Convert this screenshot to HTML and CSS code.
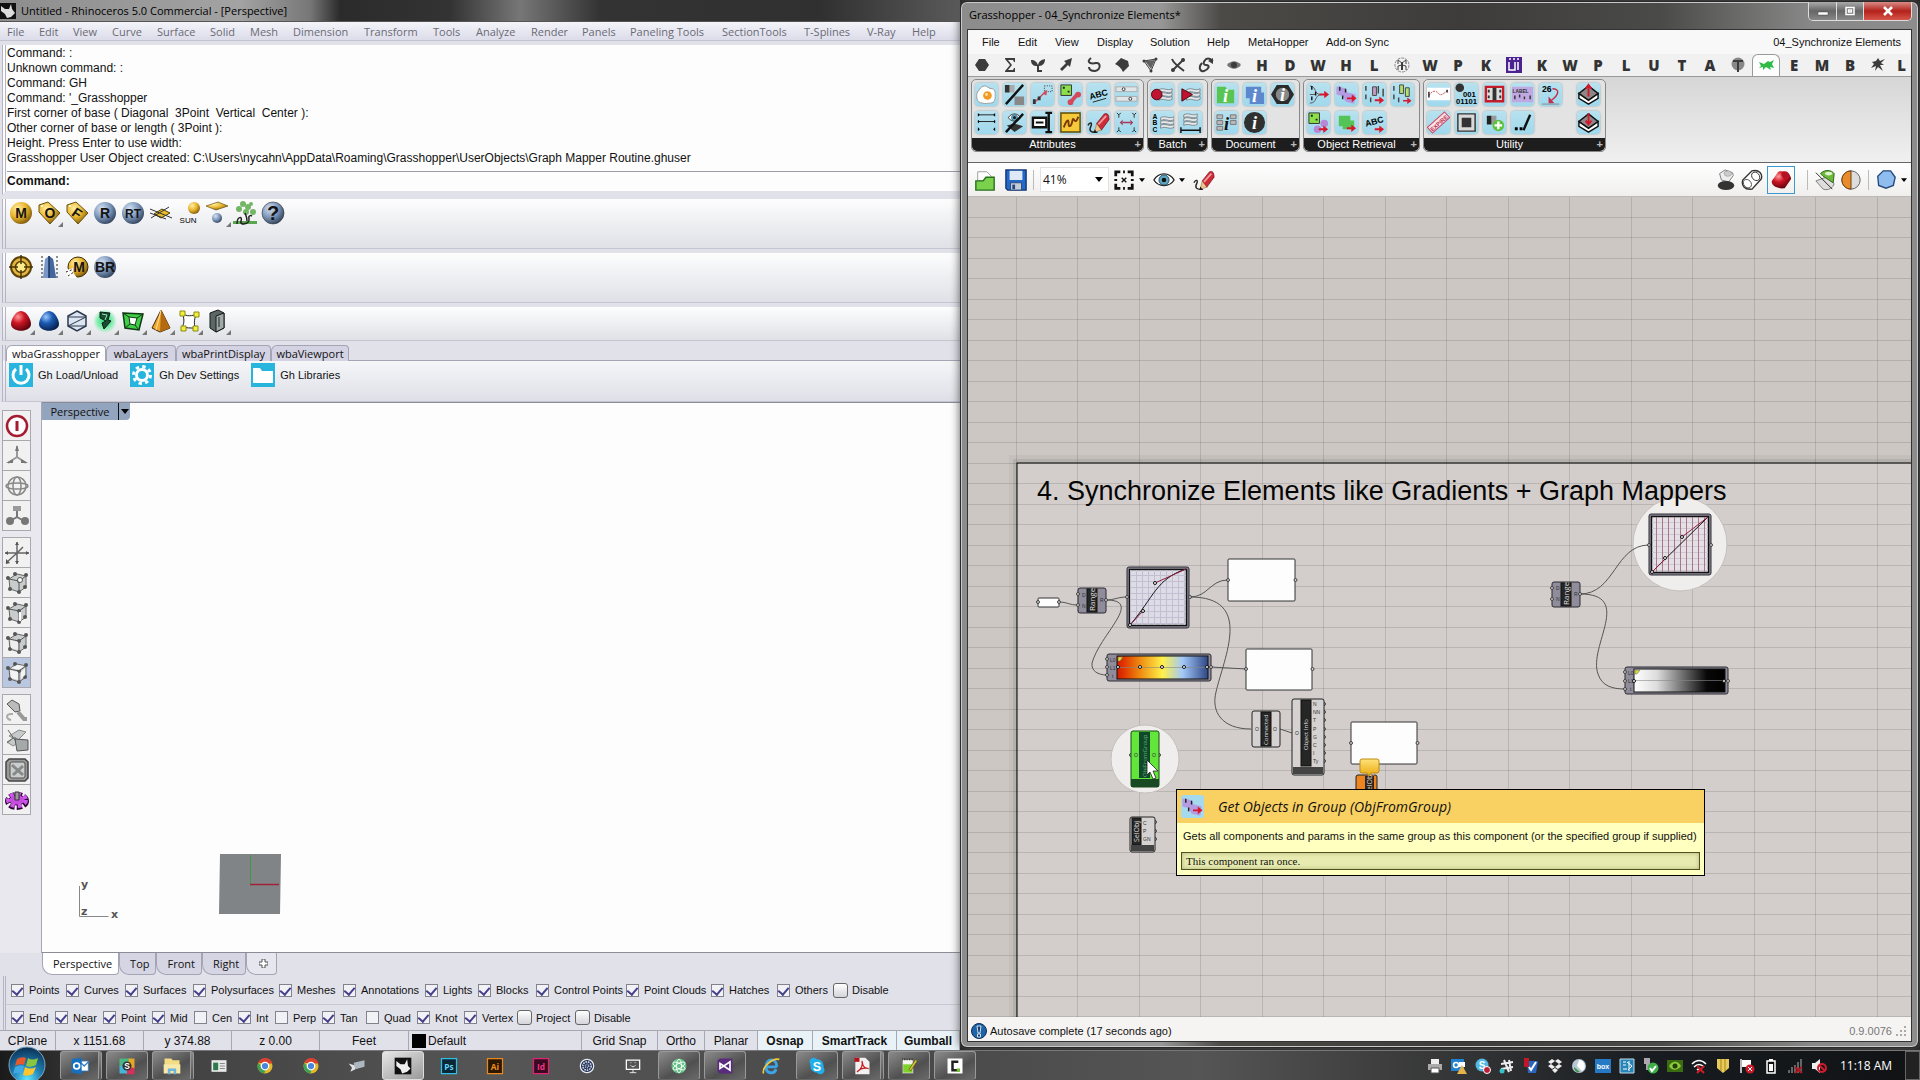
FILE: index.html
```html
<!DOCTYPE html>
<html lang="en">
<head>
<meta charset="utf-8">
<title>Untitled - Rhinoceros 5.0 Commercial - [Perspective]</title>
<link rel="stylesheet" href="styles.css">
</head>
<body>
<svg class="defs" aria-hidden="true">
  <defs>
    <radialGradient id="gold" cx=".35" cy=".3" r=".8"><stop offset="0" stop-color="#fff0a0"/><stop offset=".5" stop-color="#e8b32c"/><stop offset="1" stop-color="#6d4a05"/></radialGradient>
    <radialGradient id="steel" cx=".35" cy=".3" r=".8"><stop offset="0" stop-color="#d5e2f2"/><stop offset=".5" stop-color="#7d97bb"/><stop offset="1" stop-color="#26354d"/></radialGradient>
    <radialGradient id="red" cx=".35" cy=".3" r=".8"><stop offset="0" stop-color="#ff9a9a"/><stop offset=".4" stop-color="#cf1626"/><stop offset="1" stop-color="#4d0008"/></radialGradient>
    <radialGradient id="blue" cx=".35" cy=".3" r=".8"><stop offset="0" stop-color="#9cc8ff"/><stop offset=".4" stop-color="#1c5cb4"/><stop offset="1" stop-color="#04183e"/></radialGradient>
    <radialGradient id="orb" cx=".5" cy=".9" r=".9"><stop offset="0" stop-color="#5ee6ff"/><stop offset=".45" stop-color="#1f7fb5"/><stop offset="1" stop-color="#0b2f52"/></radialGradient>
    <radialGradient id="glow"><stop offset="0" stop-color="#28dd78"/><stop offset=".6" stop-color="#7fedac"/><stop offset="1" stop-color="#7fedac" stop-opacity="0"/></radialGradient>
    <linearGradient id="heat"><stop offset="0" stop-color="#d61a00"/><stop offset=".08" stop-color="#e03800"/><stop offset=".25" stop-color="#ee8a10"/><stop offset=".5" stop-color="#fff14a"/><stop offset=".72" stop-color="#a3c8fa"/><stop offset="1" stop-color="#2e4684"/></linearGradient>
    <linearGradient id="mono"><stop offset="0" stop-color="#fff"/><stop offset=".25" stop-color="#ddd"/><stop offset=".8" stop-color="#080808"/><stop offset="1" stop-color="#000"/></linearGradient>
    <linearGradient id="tag" x2="0" y2="1"><stop offset="0" stop-color="#ffe27a"/><stop offset="1" stop-color="#e8a90c"/></linearGradient>
    <pattern id="grid" width="123" height="41" patternUnits="userSpaceOnUse" x="1016" y="483">
      <path d="M.5 0v41M61.5 0v41M0 .5h123M0 21.5h123" stroke="#000" stroke-opacity=".12" fill="none"/>
    </pattern>
    <pattern id="cells" width="6" height="6" patternUnits="userSpaceOnUse" x="1130" y="569"><path d="M0 .5h6M.5 0v6" stroke="#c2c0d0" stroke-width="1" fill="none"/></pattern>
    <pattern id="stripes" width="6" height="6" patternUnits="userSpaceOnUse" x="1651" y="516"><path d="M0 .5h6" stroke="#ccc7d2" fill="none"/><path d="M5.5 0v6" stroke="#a87886" fill="none"/></pattern>
    <symbol id="corner" viewBox="0 0 5 5"><path d="M5 0v5H0z" fill="#777"/></symbol>
    <symbol id="cube" viewBox="0 0 24 24"><path d="M4 8l8-5 9 2v11l-7 5-9-3z" fill="#c9cccd" stroke="#666"/><path d="M4 8l10 2v11M14 10l7-5" fill="none" stroke="#555"/><g fill="#555"><circle cx="3" cy="7" r="2"/><circle cx="10" cy="3" r="2"/><circle cx="21" cy="4" r="2"/><circle cx="14" cy="10" r="2"/><circle cx="20" cy="16" r="2"/><circle cx="5" cy="18" r="2"/><circle cx="14" cy="21" r="2"/></g></symbol>
    <symbol id="stack" viewBox="0 0 24 24"><g fill="#e4e8ea" stroke="#6c7478" stroke-width=".8"><path d="M8 18c5-3 9 2 14-1v-3c-5 3-9-2-14 1z"/><path d="M8 14c5-3 9 2 14-1v-3c-5 3-9-2-14 1z"/><path d="M8 10c5-3 9 2 14-1V6c-5 3-9-2-14 1z"/></g></symbol>
    <symbol id="rarrow" viewBox="0 0 10 8"><path d="M0 3h5V0l5 4-5 4V5H0z" fill="#d8182c"/></symbol>
    <symbol id="chrome" viewBox="0 0 24 24"><circle cx="12" cy="12" r="9" fill="#e4b929"/><path d="M4 8a9 9 0 0 1 17 1h-9z" fill="#d9412f"/><path d="M4 8a9 9 0 0 0 7 13l3-7-6-1z" fill="#3ca354"/><circle cx="12" cy="12" r="4.500" fill="#4a86e0" stroke="#fff" stroke-width="1.500"/></symbol>
    <symbol id="pencil" viewBox="0 0 24 24"><path d="M1 15c2-4 5-3 3 1s-1 7 7 6" fill="none" stroke="#222" stroke-width="1.500"/><path d="M10 13L18 3q5-2 5 6l-8 11z" fill="#cf2b36" stroke="#6d1018" stroke-width=".7"/><path d="M12 14l8-9" stroke="#f09aa0" stroke-width="2"/><path d="M10 13l5 7-7 2z" fill="#f0c690" stroke="#7a5424" stroke-width=".5"/><path d="M8 19l2 3-3 1z" fill="#111"/></symbol>
    <symbol id="eye" viewBox="0 0 24 24"><path d="M1 12c5-9 17-9 22 0-5 8-17 8-22 0z" fill="#fff" stroke="#222" stroke-width="1.500"/><circle cx="12" cy="12" r="5.500" fill="#5ea6c4" stroke="#1e4b60"/><circle cx="12" cy="12" r="2.500" fill="#111"/></symbol>
    <symbol id="down" viewBox="0 0 8 5"><path d="M0 0h8L4 5z" fill="#000"/></symbol>
    <symbol id="group" viewBox="0 0 24 24"><path d="M3 5l7 2 2 4 8 2-1 7-7-2-3-6-6-1z" fill="#b59be2" stroke="#b59be2" stroke-width="3" stroke-linejoin="round"/><path d="M5 4v4M11 6v4M8 13v4" stroke="#222" stroke-width="1.500"/><use href="#rarrow" x="12" y="12" width="11" height="8"/></symbol>
    <symbol id="book" viewBox="0 0 24 24"><path d="M12 3l10 8-10 7L2 11z" fill="#8f8787" stroke="#111" stroke-width="1.500"/><path d="M2 11v5l10 6 10-6v-5l-10 7z" fill="#fff" stroke="#111" stroke-width="1.500"/></symbol>
  </defs>
</svg>

<div class="desktop">
<main class="rhino">
  <header class="rhino-title">
    <svg width="16" height="16" viewBox="0 0 16 16"><path d="M0 0h16v16H0z" fill="#111"/><path d="M1 3l4 3 4 0 2-5 1 5 3 4-4 4-4 1-2-4-4-3z" fill="#ddd"/></svg>
    <h1>Untitled - Rhinoceros 5.0 Commercial - [Perspective]</h1>
  </header>
  <nav class="rhino-menu">
    <a href="#">File</a><a href="#">Edit</a><a href="#">View</a><a href="#">Curve</a><a href="#">Surface</a><a href="#">Solid</a><a href="#">Mesh</a><a href="#">Dimension</a><a href="#">Transform</a><a href="#">Tools</a><a href="#">Analyze</a><a href="#">Render</a><a href="#">Panels</a><a href="#">Paneling Tools</a><a href="#">SectionTools</a><a href="#">T-Splines</a><a href="#">V-Ray</a><a href="#">Help</a>
  </nav>

  <section class="band command">
    <div class="history">
      <p>Command: :</p><p>Unknown command: :</p><p>Command: GH</p><p>Command: '_Grasshopper</p>
      <p>First corner of base ( Diagonal&nbsp; 3Point&nbsp; Vertical&nbsp; Center ):</p><p>Other corner of base or length ( 3Point ):</p><p>Height. Press Enter to use width:</p>
      <p>Grasshopper User Object created: C:\Users\nycahn\AppData\Roaming\Grasshopper\UserObjects\Graph Mapper Routine.ghuser</p>
    </div>
    <div class="prompt"><label for="cmd">Command:</label><input id="cmd" type="text"></div>
  </section>

  <section class="band tools tall">
    <button aria-label="Materials"><svg viewBox="0 0 24 24"><circle cx="12" cy="12" r="11" fill="url(#gold)"/><text x="12" y="17" class="glyph">M</text></svg></button>
    <button aria-label="Options"><svg viewBox="0 0 24 24"><path d="M2 4l9-3 12 11-10 11L2 11z" fill="url(#gold)" stroke="#6b5310"/><circle cx="5" cy="5" r="1" fill="#fff"/><text x="13" y="17" class="glyph">O</text></svg><svg class="corner"><use href="#corner"/></svg></button>
    <button aria-label="Frame buffer"><svg viewBox="0 0 24 24"><path d="M2 4l9-3 12 11-10 11L2 11z" fill="url(#gold)" stroke="#6b5310"/><circle cx="5" cy="5" r="1" fill="#fff"/><text x="12" y="17" class="glyph" transform="rotate(35 12 12)">F</text></svg></button>
    <button aria-label="Render"><svg viewBox="0 0 24 24"><circle cx="12" cy="12" r="11" fill="url(#steel)"/><text x="12" y="17" class="glyph">R</text></svg></button>
    <button aria-label="Render real time"><svg viewBox="0 0 24 24"><circle cx="12" cy="12" r="11" fill="url(#steel)"/><text x="12" y="17" class="glyph small">RT</text></svg></button>
    <button aria-label="Plane"><svg viewBox="0 0 24 24"><path d="M5 13l8-5 8 4-9 5z" fill="#e6bb2e" stroke="#4b3b06"/><path d="M1 8l22 9M2 17L20 6M1 12l16 6" stroke="#333" fill="none"/></svg></button>
    <button aria-label="Sun"><svg viewBox="0 0 24 24"><circle cx="17" cy="7" r="6" fill="url(#gold)"/><text x="11" y="22" class="sun">SUN</text></svg></button>
    <button aria-label="Light"><svg viewBox="0 0 24 24"><path d="M1 5l12-4 10 4-12 4z" fill="url(#gold)" stroke="#705714" stroke-width=".7"/><circle cx="12" cy="17" r="5" fill="url(#steel)"/></svg><svg class="corner"><use href="#corner"/></svg></button>
    <button aria-label="Vegetation"><svg viewBox="0 0 24 24"><path d="M0 20h24v3H0z" fill="#5aa64c"/><g fill="#73b665"><circle cx="10" cy="3" r="3"/><circle cx="15" cy="6" r="3"/><circle cx="6" cy="8" r="3"/><circle cx="20" cy="11" r="3"/><circle cx="13" cy="11" r="3"/><circle cx="18" cy="3" r="2"/></g><path d="M4 23c0-8 6-8 4-3s9 3 8-2 3-3 3-3M14 20c0-4-1-5-2-8" stroke="#222" fill="none" stroke-width="1.500"/></svg></button>
    <button aria-label="Help"><svg viewBox="0 0 24 24"><circle cx="12" cy="12" r="11" fill="url(#steel)" stroke="#333" stroke-width=".6"/><text x="12" y="19" class="glyph big">?</text></svg></button>
  </section>
  <section class="band tools tall">
    <button aria-label="Target"><svg viewBox="0 0 24 24"><circle cx="12" cy="12" r="10" fill="#e4b63f" stroke="#5d430a" stroke-width="2"/><circle cx="12" cy="12" r="5.500" fill="#ffeb8a" stroke="#5d430a" stroke-width="1.500"/><path d="M12 0v9M12 15v9M0 12h9M15 12h9" stroke="#4a3507" stroke-width="1.500"/></svg></button>
    <button aria-label="Clip"><svg viewBox="0 0 24 24"><path d="M6 23L8 4l4-3 4 3 3 19z" fill="#7897c6"/><path d="M12 1l4 3 3 19h-7z" fill="#44669f"/><path d="M12 1v22" stroke="#16305c" stroke-width="1.500"/><path d="M5 1v22M20 1v22" stroke="#222" stroke-dasharray="2 2"/></svg></button>
    <button aria-label="Edit material"><svg viewBox="0 0 24 24"><circle cx="13" cy="12" r="10" fill="url(#gold)" stroke="#3a2a04"/><text x="14" y="17" class="glyph">M</text><path d="M1 15l8-2-1 4 4 6H3z" fill="#fff"/><path d="M1 17l8-3M3 21l6-4" stroke="#222" stroke-dasharray="2 2"/></svg></button>
    <button aria-label="Batch render"><svg viewBox="0 0 24 24"><circle cx="12" cy="12" r="11" fill="url(#steel)"/><text x="12" y="17" class="glyph">BR</text></svg></button>
  </section>
  <section class="band tools">
    <button aria-label="Red egg"><svg viewBox="0 0 24 24"><path d="M12 2c6 0 10 9 10 13 0 9-20 9-20 0C2 11 6 2 12 2z" fill="url(#red)"/></svg><svg class="corner"><use href="#corner"/></svg></button>
    <button aria-label="Blue egg"><svg viewBox="0 0 24 24"><path d="M12 2c6 0 10 9 10 13 0 9-20 9-20 0C2 11 6 2 12 2z" fill="url(#blue)"/></svg><svg class="corner"><use href="#corner"/></svg></button>
    <button aria-label="Wire box"><svg viewBox="0 0 24 24"><path d="M12 2l9 5v10l-9 5-9-5V7z" fill="#dce6f2" stroke="#2c3a4c" stroke-width="1.500"/><path d="M3 8h18L3 17h18" fill="none" stroke="#2c3a4c"/></svg><svg class="corner"><use href="#corner"/></svg></button>
    <button aria-label="Bolt"><svg viewBox="0 0 24 24"><circle cx="12" cy="12" r="12" fill="url(#glow)"/><path d="M7 3l10 1-2 7 3 1-7 8-2-6 4-2-6-3z" fill="#1c4a32" stroke="#0a1d13"/><path d="M9 5l5 1-2 5" stroke="#7fedac" fill="none"/></svg><svg class="corner"><use href="#corner"/></svg></button>
    <button aria-label="Green surface"><svg viewBox="0 0 24 24"><path d="M2 4l20 1-4 16-14-2z" fill="#3fcf48" stroke="#123a15" stroke-width="1.500"/><path d="M8 8l8 1-2 7-5-1z" fill="#fff" stroke="#123a15"/><path d="M2 4l6 4M22 5l-6 4M18 21l-4-5M4 19l5-4" stroke="#123a15"/></svg><svg class="corner"><use href="#corner"/></svg></button>
    <button aria-label="Cone"><svg viewBox="0 0 24 24"><path d="M12 1L3 19l8 4 10-4z" fill="#f0a52e" stroke="#3f2703"/><path d="M12 1l-1 22 10-4z" fill="#b46a10"/><path d="M12 1L7 21" stroke="#ffe3a0"/></svg><svg class="corner"><use href="#corner"/></svg></button>
    <button aria-label="Curve points"><svg viewBox="0 0 24 24"><path d="M5 4c4 4 11 3 15 1-3 4-3 9-2 14-4 0-9 0-13-1 3-4 2-10 0-14z" fill="#fff" stroke="#222"/><g fill="#f2ee3c" stroke="#8c8a10"><path d="M3 2h5v5H3zM17 3h5v5h-5zM4 17h5v5H4zM16 17h5v5h-5z"/></g></svg><svg class="corner"><use href="#corner"/></svg></button>
    <button aria-label="Block"><svg viewBox="0 0 24 24"><path d="M5 4l8-3 6 3v15l-8 4-6-4z" fill="#5c6664" stroke="#141818"/><path d="M11 7l8-3v15l-8 4z" fill="#9fa9a7" stroke="#141818"/><path d="M14 8v10" stroke="#222"/></svg><svg class="corner"><use href="#corner"/></svg></button>
  </section>

  <section class="band libs">
    <div class="tabs" role="tablist">
      <button class="on" role="tab">wbaGrasshopper</button><button role="tab">wbaLayers</button><button role="tab">wbaPrintDisplay</button><button role="tab">wbaViewport</button>
    </div>
    <div class="lib-row">
      <button><svg viewBox="0 0 24 24"><path d="M0 0h24v24H0z" fill="#27b4dd"/><path d="M7 6a8 8 0 1 0 10 0M12 2v10" stroke="#fff" stroke-width="3" fill="none"/></svg>Gh Load/Unload</button>
      <button><svg viewBox="0 0 24 24"><path d="M0 0h24v24H0z" fill="#27b4dd"/><circle cx="12" cy="12" r="5.500" fill="none" stroke="#fff" stroke-width="3"/><circle cx="12" cy="12" r="8.500" fill="none" stroke="#fff" stroke-width="3" stroke-dasharray="3.340 3.340"/></svg>Gh Dev Settings</button>
      <button><svg viewBox="0 0 24 24"><path d="M0 0h24v24H0z" fill="#27b4dd"/><path d="M2 5h7l2 3h11v12H2z" fill="#fff"/></svg>Gh Libraries</button>
    </div>
  </section>

  <div class="work">
    <aside class="side">
      <div class="side-group">
        <button aria-label="Toggle"><svg viewBox="0 0 24 24"><circle cx="12" cy="12" r="10" fill="#fff" stroke="#a51c30" stroke-width="2.500"/><path d="M12 7v10" stroke="#a51c30" stroke-width="3"/></svg></button>
        <button aria-label="Move"><svg viewBox="0 0 24 24"><path d="M12 2v11M12 13l-9 6M12 13l9 6" stroke="#999" stroke-width="2"/><path d="M10 7l2-6 2 6zM1 19l7-4v4zM23 19l-7-4v4z" fill="#777"/></svg></button>
        <button aria-label="Rotate"><svg viewBox="0 0 24 24"><g fill="none" stroke="#888" stroke-width="1.500"><circle cx="12" cy="12" r="9"/><ellipse cx="12" cy="12" rx="11" ry="3"/><ellipse cx="12" cy="12" rx="4" ry="9"/></g></svg></button>
        <button aria-label="Scale"><svg viewBox="0 0 24 24"><path d="M12 5v8l-7 4M12 13l7 4" stroke="#777" stroke-width="2" fill="none"/><path d="M8 2h8v5H8z" fill="#999"/><circle cx="5" cy="17" r="4" fill="#777"/><circle cx="20" cy="17" r="4" fill="#777"/></svg></button>
      </div>
      <div class="side-group">
        <button aria-label="Directions"><svg viewBox="0 0 24 24"><path d="M12 12V1M12 12h12M12 12H0M12 12v11M12 12L1 22M12 12l6-6" stroke="#666" stroke-width="1.500"/><path d="M10 4l2-3 2 3zM3 10l-3 2 3 2zM21 10l3 2-3 2zM10 20l2 3 2-3zM1 18v5l4-1z" fill="#555"/></svg></button>
        <button aria-label="Vertex"><svg viewBox="0 0 24 24"><use href="#cube"/><circle cx="15" cy="9" r="2.500" fill="#fff" stroke="#555"/></svg></button>
        <button aria-label="Edge"><svg viewBox="0 0 24 24"><use href="#cube"/><path d="M15 11v9" stroke="#fff" stroke-width="2"/></svg></button>
        <button aria-label="Face"><svg viewBox="0 0 24 24"><use href="#cube"/><path d="M5 9l8 2v8l-7-2z" fill="#eee"/></svg></button>
        <button class="on" aria-label="Object"><svg viewBox="0 0 24 24"><use href="#cube"/><path d="M5 9l8 2v8l-7-2zM6 7l6-3 7 1-5 4zM16 11l4-4v7l-4 4z" fill="#f4f4f4"/></svg></button>
      </div>
      <div class="side-group">
        <button aria-label="Brush"><svg viewBox="0 0 24 24"><path d="M2 6l5-4 7 4 1 7-5 1z" fill="#bbb" stroke="#555"/><path d="M13 14l6 7 3 0" stroke="#999" stroke-width="4" fill="none"/><path d="M8 16c-8-1-7 5-2 6" stroke="#aaa" stroke-width="2" fill="none"/></svg></button>
        <button aria-label="Patch"><svg viewBox="0 0 24 24"><path d="M4 8l10-6 7 2-8 8zM2 14l8-5 4 5-6 4z" fill="#c6caca" stroke="#888"/><path d="M3 2l9 13M8 10l-6 5" stroke="#666"/><path d="M10 11l13 1v10l-11 1z" fill="#a5a9a9" stroke="#555"/></svg></button>
        <button aria-label="Exit"><svg viewBox="0 0 24 24"><path d="M4 1h16l3 3v16l-3 3H4l-3-3V4z" fill="#999" stroke="#444" stroke-width="1.500"/><rect x="5" y="4" width="15" height="16" rx="2" fill="#c9cdcd" stroke="#555"/><path d="M7 7l11 10M18 8L8 17" stroke="#888" stroke-width="3"/></svg></button>
        <button aria-label="Settings"><svg viewBox="0 0 24 24"><ellipse cx="12" cy="13" rx="9" ry="6" fill="none" stroke="#30063a" stroke-width="6" stroke-dasharray="5 2"/><ellipse cx="12" cy="12" rx="8" ry="5" fill="#c64be0" stroke="#30063a"/><ellipse cx="12" cy="12" rx="9" ry="6" fill="none" stroke="#cf57e8" stroke-width="4" stroke-dasharray="4 3"/><path d="M10 4h4v8h-4z" fill="#999" stroke="#333"/></svg></button>
      </div>
    </aside>
    <section class="viewport">
      <div class="view-label"><span>Perspective</span><button aria-label="Viewport menu"><svg width="8" height="5"><use href="#down"/></svg></button></div>
      <svg class="scene" viewBox="0 0 220 70">
        <path d="M37.500 38v30.500h29" fill="none" stroke="#888"/>
        <text x="39" y="40">y</text><text x="39" y="67">z</text><text x="69" y="70">x</text>
        <path d="M178 6h61l-1 60h-61z" fill="#808487"/>
        <path d="M208.500 7v29" stroke="#3f9a44"/><path d="M208 36.500h29" stroke="#a02038" stroke-width="1.500"/>
      </svg>
    </section>
  </div>
  <div class="view-tabs" role="tablist">
    <button class="on" role="tab">Perspective</button><button role="tab">Top</button><button role="tab">Front</button><button role="tab">Right</button><button role="tab" aria-label="New viewport"><svg width="9" height="9" viewBox="0 0 9 9"><path d="M3 0h3v3h3v3H6v3H3V6H0V3h3z" fill="#fff" stroke="#555"/></svg></button>
  </div>
  <div class="checks filters">
    <label><input type="checkbox" checked>Points</label><label><input type="checkbox" checked>Curves</label><label><input type="checkbox" checked>Surfaces</label><label><input type="checkbox" checked>Polysurfaces</label><label><input type="checkbox" checked>Meshes</label><label><input type="checkbox" checked>Annotations</label><label><input type="checkbox" checked>Lights</label><label><input type="checkbox" checked>Blocks</label><label><input type="checkbox" checked>Control Points</label><label><input type="checkbox" checked>Point Clouds</label><label><input type="checkbox" checked>Hatches</label><label><input type="checkbox" checked>Others</label><label><input type="checkbox" class="round">Disable</label>
  </div>
  <div class="checks snaps">
    <label><input type="checkbox" checked>End</label><label><input type="checkbox" checked>Near</label><label><input type="checkbox" checked>Point</label><label><input type="checkbox" checked>Mid</label><label><input type="checkbox">Cen</label><label><input type="checkbox" checked>Int</label><label><input type="checkbox">Perp</label><label><input type="checkbox" checked>Tan</label><label><input type="checkbox">Quad</label><label><input type="checkbox" checked>Knot</label><label><input type="checkbox" checked>Vertex</label><label><input type="checkbox" class="round">Project</label><label><input type="checkbox" class="round">Disable</label>
  </div>
  <footer class="rhino-status">
    <span>CPlane</span><span>x 1151.68</span><span>y 374.88</span><span>z 0.00</span><span>Feet</span><span class="layer"><i></i>Default</span><button>Grid Snap</button><button>Ortho</button><button>Planar</button><button class="on">Osnap</button><button class="on">SmartTrack</button><button class="on">Gumball</button>
  </footer>
</main>

<section class="gh">
  <header class="gh-title">
    <h2>Grasshopper - 04_Synchronize Elements*</h2>
    <div class="win-buttons">
      <button aria-label="Minimize"><svg width="12" height="10"><path d="M1 6h10v3H1z" fill="#fff" stroke="#444" stroke-width=".5"/></svg></button>
      <button aria-label="Maximize"><svg width="12" height="10"><path d="M2 1.500h8v7H2zM4.500 4h3v2h-3z" fill="none" stroke="#fff" stroke-width="1.500"/></svg></button>
      <button class="close" aria-label="Close"><svg width="12" height="10"><path d="M2 1l8 8M10 1L2 9" stroke="#fff" stroke-width="2.500"/></svg></button>
    </div>
  </header>
  <div class="gh-body">
    <nav class="gh-menu">
      <a href="#">File</a><a href="#">Edit</a><a href="#">View</a><a href="#">Display</a><a href="#">Solution</a><a href="#">Help</a><a href="#">MetaHopper</a><a href="#">Add-on Sync</a><span class="doc">04_Synchronize Elements</span>
    </nav>
    <nav class="cats">
      <button aria-label="Params"><svg viewBox="0 0 16 16"><path d="M5 2h6l4 6-4 6H5L1 8z"/></svg></button>
      <button aria-label="Maths"><svg viewBox="0 0 16 16"><path d="M3 1h10v4h-1l-1-2H6l4 5-4 5h5l1-2h1v4H3v-1l5-6-5-6z"/></svg></button>
      <button aria-label="Sets"><svg viewBox="0 0 16 16"><path d="M7 15V9C3 9 1 7 1 3c4 0 6 2 7 5 1-4 3-5 7-6 0 4-2 7-6 7v4h3v2z"/></svg></button>
      <button aria-label="Vector"><svg viewBox="0 0 16 16"><path d="M2 12l6-6-2-2 8-3-2 9-2-2-6 6z"/></svg></button>
      <button aria-label="Curve"><svg viewBox="0 0 16 16"><path class="ln" d="M5 1c-6 5 1 6 5 5 5-1 5 7-1 8-4 0-6-1-6-4"/></svg></button>
      <button aria-label="Surface"><svg viewBox="0 0 16 16"><path d="M1 7l6-6 7 3 1 5-6 6c-2-4-4-6-8-8z"/></svg></button>
      <button aria-label="Mesh"><svg viewBox="0 0 16 16"><path d="M3 4l10-1-4 9z" opacity=".8"/><path d="M2 4l12-2-5 12z" fill="none" stroke="#3c3c3c"/><circle cx="2" cy="4" r="1.500"/><circle cx="14" cy="2" r="1.500"/><circle cx="9" cy="14" r="1.500"/></svg></button>
      <button aria-label="Intersect"><svg viewBox="0 0 16 16"><path class="ln" d="M2 2c2 5 7 8 12 12M2 14L14 2"/><circle cx="13" cy="3" r="2"/><circle cx="3" cy="13" r="2"/></svg></button>
      <button aria-label="Transform"><svg viewBox="0 0 16 16"><path class="ln" d="M4 6c-4 4-2 9 2 8s7-6 2-6-1-8 4-6l3 2"/><path d="M15 1l0 6-5-3z"/></svg></button>
      <button aria-label="Display"><svg viewBox="0 0 16 16"><path d="M1 8c4-5 10-5 14 0-4 5-10 5-14 0z" opacity=".7"/><circle cx="8" cy="8" r="3"/></svg></button>
      <button>H</button><button>D</button><button>W</button><button>H</button><button>L</button>
      <button aria-label="Spider"><svg viewBox="0 0 16 16"><circle cx="8" cy="8" r="7" fill="none" stroke="#888" stroke-dasharray="3 1"/><path d="M7 5h2v8H7z"/><path d="M8 6L4 3v4M8 6l4-3v4M8 8l-4 1v4M8 8l4 1v4" fill="none" stroke="#444"/></svg></button>
      <button>W</button><button>P</button><button>K</button>
      <button aria-label="UI"><svg viewBox="0 0 16 16"><path d="M0 0h16v16H0z" fill="#4c2292"/><path d="M3 5v8h6V5M12 5v8M3 2h2M7 2h2M11 2h2" fill="none" stroke="#fff" stroke-width="1.500"/></svg></button>
      <button>K</button><button>W</button><button>P</button><button>L</button><button>U</button><button>T</button><button>A</button>
      <button aria-label="Tree"><svg viewBox="0 0 16 16"><circle cx="8" cy="7" r="6.500" fill="#888"/><path d="M3 3h10v2H9v10H7V5H3z"/></svg></button>
      <button class="on" aria-label="MetaHopper"><svg viewBox="0 0 16 16"><path d="M1 4l5 2 4-3 2 1 4-2-2 4 2 4-4-1 1 3-5-3-3 3v-3l-4 1 2-2z" fill="#30bb48"/></svg></button>
      <button>E</button><button>M</button><button>B</button>
      <button aria-label="Gecko"><svg viewBox="0 0 16 16"><path d="M2 5l4-1 2-3 2 3 5-2-4 4 3 2-4 0 3 6-5-4-3 4 1-5-5 2 3-4z"/></svg></button>
      <button>L</button>
    </nav>
    <div class="ribbon">
      <fieldset class="panel c6">
        <div class="icons">
          <button aria-label="Bake"><svg viewBox="0 0 24 24"><path d="M3 9c2-2 3-6 7-6 3 0 4 3 8 3 4 1 3 6 3 8s0 7-5 7c-3 0-5 1-8 0-3 0-6-2-6-5 0-2-1-4 1-7z" fill="#fff" stroke="#999"/><circle cx="13" cy="13" r="4.500" fill="#f19a24"/><circle cx="12" cy="12" r="1.500" fill="#ffe2a8"/></svg></button>
          <button aria-label="Enable"><svg viewBox="0 0 24 24"><path d="M2 2h5v8H2z" fill="#333"/><path d="M7 2h5v8H7z" fill="#aaa"/><path d="M12 14h10v9H12z" fill="#888"/><path d="M3 22L21 2" stroke="#111" stroke-width="2.500"/></svg></button>
          <button aria-label="Move objects"><svg viewBox="0 0 24 24"><path d="M14 3h8v6h-8z" fill="none" stroke="#333" stroke-dasharray="1 1.500"/><path d="M5 19L16 8" stroke="#d14b5c" stroke-width="1.500"/><path d="M2 17h3v5H2zM7 14h3v4H7z" fill="#333"/><path d="M12 11l5-4-1 6z" fill="#d14b5c"/></svg></button>
          <button aria-label="Group color"><svg viewBox="0 0 24 24"><path d="M2 2h11v11H2z" fill="#8be04a" stroke="#333"/><path d="M4 5h2M9 9h2" stroke="#222" stroke-width="2"/><path d="M12 20l7-8" stroke="#d54a58" stroke-width="4"/><circle cx="12" cy="20" r="3" fill="#d54a58"/><circle cx="20" cy="12" r="3" fill="#d54a58"/></svg></button>
          <button aria-label="Nickname"><svg viewBox="0 0 24 24"><text x="12" y="15" class="abc" transform="rotate(-15 12 12)">ABC</text><path d="M6 20l14-4" stroke="#222"/></svg></button>
          <button aria-label="Sliders"><svg viewBox="0 0 24 24"><path d="M1 4h22v5H1zM1 14h22v5H1z" fill="#dfe5e8" stroke="#aaa"/><circle cx="9" cy="6.500" r="1.500" fill="#fff" stroke="#333"/><circle cx="16" cy="16.500" r="1.500" fill="#fff" stroke="#333"/></svg></button>
          <button aria-label="Align"><svg viewBox="0 0 24 24"><path d="M3 4h18M3 11h18" stroke="#222"/><path d="M3 2l2 2-2 2zM3 9l2 2-2 2zM3 17l2 2-2 2zM21 2l-2 2 2 2zM21 9l-2 2 2 2zM21 17l-2 2 2 2z"/></svg></button>
          <button aria-label="Preview"><svg viewBox="0 0 24 24"><use href="#eye" width="20" height="14" x="2"/><path d="M4 15l8-2 9 3-9 6z" fill="#333"/><path d="M3 22L21 3" stroke="#111" stroke-width="2.500"/></svg></button>
          <button aria-label="Rename"><svg viewBox="0 0 24 24"><path d="M2 7h14v10H2z" fill="#fff" stroke="#111" stroke-width="2.500"/><path d="M5 12h8" stroke="#111" stroke-width="2"/><path d="M15 2h7M18.500 2v20M15 22h7" stroke="#111" stroke-width="2.500"/></svg></button>
          <button aria-label="Scribble"><svg viewBox="0 0 24 24"><path d="M2 2h20v20H2z" fill="#f5c93a" stroke="#604a05" stroke-width="1.500"/><path d="M5 17c3-8 5-9 5-4s3 3 4-3 3 7 6-4" fill="none" stroke="#7b3a05" stroke-width="2"/></svg></button>
          <button aria-label="Draw"><svg viewBox="0 0 24 24"><use href="#pencil"/></svg></button>
          <button aria-label="Spacing"><svg viewBox="0 0 24 24"><path d="M4 4v16M20 4v16" stroke="#333" stroke-dasharray="3 10"/><path d="M2 2l2 2 2-2M2 22l2-2 2 2M18 2l2 2 2-2M18 22l2-2 2 2" fill="none" stroke="#222"/><path d="M8 12h8" stroke="#a33a5c" stroke-width="1.500"/><path d="M8 9v6l-3-3zM16 9v6l3-3z" fill="#a33a5c"/></svg></button>
        </div><legend>Attributes<b>+</b></legend>
      </fieldset>
      <fieldset class="panel c2">
        <div class="icons">
          <button aria-label="Record"><svg viewBox="0 0 24 24"><use href="#stack"/><circle cx="6" cy="12" r="5.500" fill="#c01330" stroke="#4c0712"/></svg></button>
          <button aria-label="Play"><svg viewBox="0 0 24 24"><use href="#stack"/><path d="M3 6l11 6-11 7z" fill="#c01330" stroke="#4c0712"/></svg></button>
          <button aria-label="Batch names"><svg viewBox="0 0 24 24"><use href="#stack" x="2"/><text x="4" y="8" class="tiny">A</text><text x="4" y="15" class="tiny">B</text><text x="4" y="22" class="tiny">C</text></svg></button>
          <button aria-label="Batch range"><svg viewBox="0 0 24 24"><use href="#stack" x="-3" y="-3"/><path d="M2 20h20M2 17v6M22 17v6" stroke="#111" stroke-width="1.500"/></svg></button>
        </div><legend>Batch<b>+</b></legend>
      </fieldset>
      <fieldset class="panel c3">
        <div class="icons">
          <button aria-label="Document info"><svg viewBox="0 0 24 24"><path d="M2 4h9l2 3h7v14H2z" fill="#58c452"/><text x="11" y="20" class="info">i</text></svg></button>
          <button aria-label="File info"><svg viewBox="0 0 24 24"><path d="M3 4h16v6h3v12H7v-6H3z" fill="#5e88ce"/><text x="12" y="20" class="info">i</text></svg></button>
          <button aria-label="Plugin info"><svg viewBox="0 0 24 24"><path d="M6 2h12l6 10-6 10H6L0 12z" fill="#2b2b2b"/><circle cx="12" cy="12" r="7" fill="#888"/><text x="12" y="19" class="info">i</text></svg></button>
          <button aria-label="Canvas info"><svg viewBox="0 0 24 24"><path d="M2 4h6v4H2zM2 10h6v4H2zM2 16h6v4H2zM16 4h6v4h-6zM16 10h6v4h-6z" fill="#bbb" stroke="#777"/><text x="12" y="20" class="info dark">i</text></svg></button>
          <button aria-label="Info"><svg viewBox="0 0 24 24"><circle cx="12" cy="12" r="11" fill="#303030"/><text x="12" y="19" class="info">i</text></svg></button>
        </div><legend>Document<b>+</b></legend>
      </fieldset>
      <fieldset class="panel c4">
        <div class="icons">
          <button aria-label="Connected"><svg viewBox="0 0 24 24"><path d="M3 3c8 1 3 9 12 9M3 12h6M3 21c8 0 4-8 12-9" fill="none" stroke="#555"/><path d="M5 3v4M9 9v4M5 14v4" stroke="#111" stroke-width="1.500"/><use href="#rarrow" x="13" y="8" width="10" height="8"/></svg></button>
          <button aria-label="Objects in group"><svg viewBox="0 0 24 24"><use href="#group"/></svg></button>
          <button aria-label="All objects"><svg viewBox="0 0 24 24"><path d="M3 3v5M3 12v5M16 3v8M21 6v8M8 15v5" stroke="#444" stroke-width="1.500"/><path d="M10 4h4v9h-4z" fill="#c39cc5" stroke="#444"/><use href="#rarrow" x="12" y="14" width="10" height="8"/></svg></button>
          <button aria-label="Selected objects"><svg viewBox="0 0 24 24"><path d="M3 3v5M3 12v5M8 15v5" stroke="#444" stroke-width="1.500"/><path d="M9 2h4v9H9zM15 5h4v9h-4z" fill="#b4e06e" stroke="#444"/><use href="#rarrow" x="12" y="15" width="10" height="7"/></svg></button>
          <button aria-label="By color"><svg viewBox="0 0 24 24"><path d="M2 2h11v11H2z" fill="#8be04a" stroke="#333"/><path d="M4 5h2M9 9h2" stroke="#222" stroke-width="2"/><circle cx="11" cy="19" r="4" fill="#b48ad8"/><circle cx="18" cy="13" r="4" fill="#b48ad8"/><use href="#rarrow" x="12" y="15" width="10" height="8"/></svg></button>
          <button aria-label="By shape"><svg viewBox="0 0 24 24"><path d="M4 5h12v5h4v9H8v-3H4z" fill="#53c455"/><use href="#rarrow" x="12" y="14" width="10" height="8"/></svg></button>
          <button aria-label="By name"><svg viewBox="0 0 24 24"><text x="12" y="14" class="abc" transform="rotate(-15 12 12)">ABC</text><use href="#rarrow" x="12" y="15" width="10" height="8"/></svg></button>
        </div><legend>Object Retrieval<b>+</b></legend>
      </fieldset>
      <fieldset class="panel c6 util">
        <div class="icons">
          <button aria-label="Wires"><svg viewBox="0 0 24 24"><path d="M0 5h24v13H0z" fill="#fff"/><path d="M2 13c4-6 8-5 10-2s6 0 9-3" fill="none" stroke="#c44" stroke-dasharray="2 1"/><path d="M2 9v6M21 7v3" stroke="#222" stroke-width="1.500"/></svg></button>
          <button aria-label="Binary"><svg viewBox="0 0 24 24"><circle cx="5" cy="5" r="4.500" fill="#333"/><text x="15" y="15" class="bin">001</text><text x="12" y="22" class="bin">01101</text></svg></button>
          <button aria-label="Cluster"><svg viewBox="0 0 24 24"><path d="M3 4h18v15H3z" fill="#ddd" stroke="#c81a28" stroke-width="2.500"/><path d="M10 5h4v13h-4z" fill="#333"/><path d="M6 7v3M6 13v3M18 7v3M18 13v3" stroke="#333" stroke-width="2"/></svg></button>
          <button aria-label="Label"><svg viewBox="0 0 24 24"><path d="M1 4h22v16H1z" fill="#c0a8e2"/><text x="10" y="10" class="lab">LABEL</text><path d="M4 13v4M9 12v3M14 14v3M20 13v4" stroke="#333" stroke-width="1.500"/></svg></button>
          <button aria-label="Number"><svg viewBox="0 0 24 24"><text x="8" y="9" class="num">26</text><path d="M14 6c8 0 7 6-1 12" fill="none" stroke="#c0304a" stroke-width="1.500"/><path d="M10 14v7h6z" fill="#c0304a"/><path d="M3 22h18" stroke="#888"/></svg></button>
          <button class="after-rule" aria-label="Push up"><svg viewBox="0 0 24 24"><use href="#book"/><path d="M12 14V3M9 6l3-4 3 4" stroke="#d0182a" stroke-width="2" fill="none"/></svg></button>
          <button aria-label="Expire"><svg viewBox="0 0 24 24"><g transform="rotate(-42 12 12)"><path d="M0 8h24v8H0z" fill="#f7e3e8" stroke="#c9506a"/><text x="12" y="15" class="exp">EXPIRE</text></g></svg></button>
          <button aria-label="Frame"><svg viewBox="0 0 24 24"><path d="M3 3h18v18H3z" fill="#d8d8d8" stroke="#333" stroke-width="1.500"/><path d="M7 7h10v10H7z" fill="#333"/></svg></button>
          <button aria-label="Add"><svg viewBox="0 0 24 24"><path d="M4 5h5v9H4z" fill="#222"/><path d="M9 5h5v9H9z" fill="#999"/><circle cx="16" cy="15" r="6" fill="#5cc23c"/><path d="M16 11v8M12 15h8" stroke="#fff" stroke-width="2.500"/></svg></button>
          <button aria-label="Path"><svg viewBox="0 0 24 24"><path d="M4 17h3v3H4zM9 17h3v3H9z"/><path d="M13 20L20 4" stroke="#111" stroke-width="2.500"/></svg></button>
          <button class="last" aria-label="Pull down"><svg viewBox="0 0 24 24"><use href="#book"/><path d="M12 2v11M9 10l3 4 3-4" stroke="#d0182a" stroke-width="2" fill="none"/></svg></button>
        </div><legend>Utility<b>+</b></legend>
      </fieldset>
    </div>
    <div class="canvas-bar">
      <button aria-label="Open"><svg viewBox="0 0 24 24"><path d="M4 3h10l5 5v5H4z" fill="#fff" stroke="#999"/><path d="M2 23V13h8l3-4h9v14z" fill="#7bd14c" stroke="#24701b" stroke-width="1.500"/></svg></button>
      <button aria-label="Save"><svg viewBox="0 0 24 24"><path d="M1 1h22v22H3l-2-2z" fill="#2468c8" stroke="#0e3472" stroke-width="1.500"/><path d="M5 2h14v10H5z" fill="#dfe9f5"/><path d="M6 15h12v8H6z" fill="#c6ccd6" stroke="#23487d"/><path d="M8 17h3v5H8z" fill="#23487d"/></svg></button>
      <hr>
      <span class="zoom-box"><select aria-label="Zoom"><option>41%</option></select><svg width="8" height="5"><use href="#down"/></svg></span>
      <button aria-label="Zoom extents"><svg viewBox="0 0 24 24"><path d="M3 8V3h5M16 3h5v5M21 16v5h-5M8 21H3v-5M11 3h2M11 21h2M3 11v2M21 11v2" fill="none" stroke="#111" stroke-width="3"/><path d="M9.500 9.500l5 5M14.500 9.500l-5 5" stroke="#111" stroke-width="1.500"/></svg></button>
      <svg class="drop"><use href="#down"/></svg>
      <button aria-label="Preview"><svg viewBox="0 0 24 24"><use href="#eye"/></svg></button>
      <svg class="drop"><use href="#down"/></svg>
      <button aria-label="Sketch"><svg viewBox="0 0 24 24"><use href="#pencil"/></svg></button>
      <span class="spacer"></span>
      <button aria-label="No preview"><svg viewBox="0 0 24 24"><path d="M5 5l6-4 8 3 1 3-5 7-8-2z" fill="#eee" stroke="#777"/><ellipse cx="14" cy="5" rx="4" ry="3" fill="#ccc" stroke="#888" stroke-width=".6"/><ellipse cx="12" cy="18" rx="9" ry="5" fill="#333"/></svg></button>
      <button aria-label="Wireframe"><svg viewBox="0 0 24 24"><path d="M2 12L12 2c8-2 12 4 10 9L12 22C4 23 0 18 2 12z" fill="#fff" stroke="#333" stroke-width="1.500"/><ellipse cx="16" cy="8" rx="4" ry="5" fill="none" stroke="#333" transform="rotate(-40 16 8)"/><ellipse cx="7" cy="16" rx="4" ry="5" fill="none" stroke="#555" transform="rotate(-40 7 16)"/></svg></button>
      <button class="picked" aria-label="Shaded"><svg viewBox="0 0 24 24"><path d="M2 13L9 3c7-2 14 3 14 8l-7 10C8 22 1 18 2 13z" fill="url(#red)"/><ellipse cx="17" cy="7" rx="4" ry="5" fill="#b51322" transform="rotate(-50 17 7)"/></svg></button>
      <hr>
      <button aria-label="Preview selected"><svg viewBox="0 0 24 24"><path d="M2 13l8 9c6 2 11-2 12-6l-9-7z" fill="#ddd" stroke="#777"/><path d="M7 5c5-5 12-4 15 0l-1 10L10 8z" fill="#6cb83c" stroke="#2c6214"/><ellipse cx="16" cy="5" rx="4" ry="2" fill="#dff4cc"/><path d="M2 4l18 18" stroke="#222"/></svg></button>
      <button aria-label="Mesh quality"><svg viewBox="0 0 24 24"><circle cx="12" cy="12" r="10" fill="#ddd" stroke="#555"/><path d="M12 2a10 10 0 0 0 0 20z" fill="#e88b2a" stroke="#6a3806"/></svg></button>
      <hr>
      <button aria-label="Display options"><svg viewBox="0 0 24 24"><path d="M9 2h8l5 7-2 9-8 3-8-3-1-10z" fill="#8fbdf0" stroke="#274a7c" stroke-width="1.500"/></svg></button>
      <svg class="drop"><use href="#down"/></svg>
    </div>
    <div class="canvas">
      <svg class="graph" width="100%" height="100%">
       <g transform="translate(-968 -197)">
        <rect x="968" y="197" width="3000" height="3000" fill="#ccc7c3"/>
        <g fill="none" stroke="#000"><path d="M1017 3000V463h3000" stroke-opacity=".04" stroke-width="16"/><path d="M1017 3000V463h3000" stroke-opacity=".08" stroke-width="8"/></g>
        <rect x="1017" y="463" width="3000" height="3000" fill="#d3cecb" stroke="#000" stroke-width="1"/>
        <rect x="968" y="197" width="3000" height="3000" fill="url(#grid)"/>
        <circle cx="1680" cy="544" r="47" fill="#f0eeed" stroke="#c4c0bd"/>
        <circle cx="1145" cy="759" r="34" fill="#f0eeed" stroke="#c4c0bd"/>
        <text x="1037" y="500" class="head">4. Synchronize Elements like Gradients + Graph Mappers</text>
        <g class="wire">
          <path d="M1059 602c8 0 10 3 19 3M1106 600c8 0 12-3 21-3M1190 597c18 0 20-17 38-17M1106 600c38 0-6 34-14 63-1 8 6 12 15 12M1190 597c64 0 34 60 26 95-5 20 6 37 35 37M1211 667l35 2M1280 729l12 4M1580 594c35 0 35-49 69-49M1580 594c54 0 8 52 18 80 4 12 14 15 27 15"/>
        </g>
        <g class="sheet">
          <rect x="1038" y="598" width="21" height="9" rx="1"/><rect x="1228" y="559" width="67" height="42" rx="1"/><rect x="1246" y="649" width="66" height="41" rx="1"/><rect x="1351" y="722" width="66" height="42" rx="1"/>
        </g>
        <g class="node">
          <rect x="1078" y="588" width="28" height="25" rx="2"/><rect x="1552" y="582" width="28" height="25" rx="2"/>
          <rect x="1127" y="567" width="62" height="61" rx="2"/><rect x="1649" y="514" width="62" height="61" rx="2"/>
          <rect x="1107" y="654" width="104" height="27" rx="2"/><rect x="1625" y="667" width="103" height="27" rx="2"/>
        </g>
        <g class="core"><rect x="1087" y="589" width="10" height="23"/><rect x="1561" y="583" width="10" height="23"/></g>
        <text class="v" transform="translate(1095 611) rotate(-90)">Range</text><text class="v" transform="translate(1569 605) rotate(-90)">Range</text>
        <g stroke="#111" stroke-width="1.500"><rect x="1129.500" y="569.500" width="57" height="56" fill="#dcdbe6"/><rect x="1651.500" y="516.500" width="57" height="56" fill="#e4e0e6"/></g>
        <path d="M1130 570h56v55h-56z" fill="url(#cells)"/><path d="M1652 517h56v55h-56z" fill="url(#stripes)"/>
        <g fill="none" stroke="#151515"><path d="M1130 625c24-28 26-46 56-56"/><path d="M1652 572l56-55"/></g>
        <g fill="none" stroke="#8d1f3c"><path d="M1130 625l13-14M1155 583l31-14M1652 572l14-14M1682 537l26-20"/></g>
        <g class="dot"><circle cx="1130" cy="625" r="1.500"/><circle cx="1143" cy="611" r="1.500"/><circle cx="1155" cy="583" r="1.500"/><circle cx="1652" cy="572" r="1.500"/><circle cx="1665" cy="558" r="1.500"/><circle cx="1682" cy="537" r="1.500"/></g>
        <rect x="1117" y="656" width="91" height="23" fill="url(#heat)" stroke="#111"/><rect x="1634" y="669" width="91" height="23" fill="url(#mono)" stroke="#111"/>
        <path d="M1118 667.500h89M1635 680.500h89" stroke="#888" stroke-opacity=".6"/>
        <g class="dot"><circle cx="1118" cy="667" r="1.500"/><circle cx="1140" cy="667" r="1.500"/><circle cx="1162" cy="667" r="1.500"/><circle cx="1184" cy="667" r="1.500"/><circle cx="1207" cy="667" r="1.500"/><circle cx="1634" cy="681" r="1.500"/><circle cx="1724" cy="681" r="1.500"/></g>
        <path d="M1118 657h5l-3 4h-2zM1635 670h5l-3 4h-2z" fill="#d8dc35" stroke="#666" stroke-width=".5"/>
        <g class="pin"><circle cx="1295.500" cy="580" r="1.500"/><circle cx="1312.500" cy="669" r="1.500"/><circle cx="1417.500" cy="743" r="1.500"/><circle cx="1351" cy="743" r="1.500"/><circle cx="1246" cy="669" r="1.500"/><circle cx="1228" cy="580" r="1.500"/><circle cx="1190" cy="597" r="1.500"/><circle cx="1127" cy="597" r="1.500"/><circle cx="1106" cy="600" r="1.500"/><circle cx="1078" cy="594" r="1.500"/><circle cx="1078" cy="605" r="1.500"/><circle cx="1038" cy="602" r="1.500"/><circle cx="1059" cy="602" r="1.500"/><circle cx="1107" cy="659" r="1.500"/><circle cx="1107" cy="667" r="1.500"/><circle cx="1107" cy="675" r="1.500"/><circle cx="1211" cy="667" r="1.500"/><circle cx="1711" cy="545" r="1.500"/><circle cx="1649" cy="545" r="1.500"/><circle cx="1580" cy="594" r="1.500"/><circle cx="1552" cy="588" r="1.500"/><circle cx="1552" cy="599" r="1.500"/><circle cx="1625" cy="672" r="1.500"/><circle cx="1625" cy="681" r="1.500"/><circle cx="1625" cy="689" r="1.500"/><circle cx="1728" cy="681" r="1.500"/><circle cx="1324" cy="704" r="1.500"/><circle cx="1324" cy="712" r="1.500"/><circle cx="1324" cy="720" r="1.500"/><circle cx="1324" cy="729" r="1.500"/><circle cx="1324" cy="737" r="1.500"/><circle cx="1324" cy="745" r="1.500"/><circle cx="1324" cy="753" r="1.500"/><circle cx="1324" cy="761" r="1.500"/><circle cx="1131" cy="755" r="1.500"/><circle cx="1159" cy="755" r="1.500"/><circle cx="1155" cy="822" r="1.500"/><circle cx="1155" cy="831" r="1.500"/><circle cx="1155" cy="839" r="1.500"/></g>
        <g fill="#d5d2d1" stroke="#222"><rect x="1252" y="711" width="28" height="36" rx="2"/><rect x="1292" y="699" width="32" height="76" rx="2"/><rect x="1130" y="817" width="25" height="35" rx="2"/></g>
        <g class="core"><rect x="1261" y="712" width="10" height="34"/><rect x="1301" y="700" width="10" height="66"/><rect x="1132" y="818" width="9" height="27"/></g>
        <path d="M1293 767h30v7h-30zM1131 845h23v6h-23z" fill="#444"/>
        <text class="v xs" transform="translate(1268 745) rotate(-90)">Connected</text><text class="v xs" transform="translate(1308 750) rotate(-90)">Object Info</text><text class="v s" transform="translate(1139 842) rotate(-90)">SelObj</text>
        <rect x="1131" y="731" width="28" height="56" rx="2" fill="#62e63c" stroke="#174a12"/><rect x="1139" y="732" width="11" height="46" fill="#12482a"/><path d="M1131 779h28v8h-28z" fill="#174a22"/>
        <text class="v g xs" transform="translate(1147 777) rotate(-90)">ObjFromGroup</text>
        <g class="port"><text x="1082" y="597">D</text><text x="1082" y="608">N</text><text x="1100" y="602">R</text><text x="1556" y="590">D</text><text x="1556" y="601">N</text><text x="1574" y="596">R</text><text x="1110" y="662">L0</text><text x="1110" y="670">L1</text><text x="1112" y="678">t</text><text x="1628" y="675">L0</text><text x="1628" y="683">L1</text><text x="1630" y="691">t</text><text x="1255" y="731">O</text><text x="1273" y="731">O</text><text x="1295" y="735">O</text><text x="1313" y="706">N</text><text x="1313" y="714">NN</text><text x="1313" y="722">T</text><text x="1313" y="731">P</text><text x="1313" y="739">G</text><text x="1313" y="747">C</text><text x="1313" y="755">I</text><text x="1313" y="763">Ty</text><text x="1134" y="757">O</text><text x="1152" y="757">O</text><text x="1143" y="825">C</text><text x="1143" y="833">P</text><text x="1143" y="841">GN</text></g>
        <rect x="1356" y="775" width="21" height="40" rx="2" fill="#ec8420" stroke="#222"/><rect x="1365" y="776" width="9" height="38" fill="#33251a"/><text class="v s" transform="translate(1372 794) rotate(-90)">SelObj</text>
        <path d="M1362 759h15q2 0 2 2v10q0 2-2 2h-6l-2 3-2-3h-5q-2 0-2-2v-10q0-2 2-2z" fill="url(#tag)" stroke="#c08a10"/>
        <path d="M1147 760v15l3-3 3 7 3-1-3-7h5z" fill="#fff" stroke="#222" stroke-width=".8"/>
       </g>
      </svg>
      <div class="tip" role="tooltip">
        <div class="tip-head"><svg viewBox="0 0 24 24"><rect width="24" height="24" rx="3" fill="#a4d9ee"/><use href="#group"/></svg><em>Get Objects in Group (ObjFromGroup)</em></div>
        <p>Gets all components and params in the same group as this component (or the specified group if supplied)</p>
        <div class="ran">This component ran once.</div>
      </div>
    </div>
    <footer class="gh-status">
      <svg width="16" height="16" viewBox="0 0 16 16"><circle cx="8" cy="8" r="7.500" fill="#1d64a8" stroke="#0b2d55"/><path d="M6 3h4l-1 7H7zM6.500 11h3v3h-3z" fill="#1b3f70" stroke="#fff" stroke-width=".8"/></svg>
      <span>Autosave complete (17 seconds ago)</span><span class="ver">0.9.0076</span>
      <svg width="12" height="12"><g fill="#aaa"><path d="M9 1h2v2H9zM9 5h2v2H9zM5 5h2v2H5zM9 9h2v2H9zM5 9h2v2H5zM1 9h2v2H1z"/></g></svg>
    </footer>
  </div>
</section>
</div>

<footer class="taskbar">
  <button class="start" aria-label="Start"><svg viewBox="0 0 38 38"><circle cx="19" cy="19" r="18" fill="url(#orb)" stroke="#7fa7c0"/><path d="M9 13q5-3 9-1l-2 7q-4-2-9 1z" fill="#e8582a"/><path d="M20 12q4 3 10 0l-2 7q-5 3-10 1z" fill="#8cc63e"/><path d="M7 21q5-3 9-1l-2 8q-4-2-9 0z" fill="#3fa9e4"/><path d="M17 21q5 3 11 0l-3 7q-5 3-10 1z" fill="#fdc52e"/></svg></button>
  <div class="apps">
    <button class="run multi" aria-label="Outlook"><svg viewBox="0 0 24 24"><path d="M10 6h12v12H10z" fill="#fff" stroke="#2a79c4"/><path d="M12 7l5 5 5-5" fill="none" stroke="#2a79c4" stroke-width="1.500"/><path d="M2 4l12-2v20L2 20z" fill="#1570c0"/><circle cx="8" cy="12" r="3.500" fill="none" stroke="#fff" stroke-width="2"/></svg></button>
    <button class="run" aria-label="Slack"><svg viewBox="0 0 24 24"><path d="M3 3h13v10H3z" fill="#48b784"/><path d="M14 3h7v12h-7z" fill="#e8a723"/><path d="M11 14h10v8H11z" fill="#d2315c"/><path d="M3 12h9v9H3z" fill="#45b7d6"/><circle cx="12" cy="12" r="5.500" fill="#333"/><text x="12" y="16" class="s-mark">S</text></svg></button>
    <button class="run multi" aria-label="Explorer"><svg viewBox="0 0 24 24"><path d="M3 3h8l2 2h8v14H3z" fill="#f3dc84"/><path d="M2 10h20v11H2z" fill="#f8e9a8"/><path d="M7 22v-7h10v7h-3v-4h-4v4z" fill="#6db4dc"/></svg></button>
    <button aria-label="Viewer"><svg viewBox="0 0 24 24"><path d="M3 5h18v14H3z" fill="#e9e9e9"/><path d="M5 8h6v9H5z" fill="#2d7a4b"/><path d="M13 9h6M13 12h6M13 15h6" stroke="#777"/></svg></button>
    <button aria-label="Chrome"><svg viewBox="0 0 24 24"><use href="#chrome"/></svg></button>
    <button aria-label="Chrome second profile"><svg viewBox="0 0 24 24"><use href="#chrome"/></svg></button>
    <button aria-label="Tool"><svg viewBox="0 0 24 24"><path d="M8 8l13-3v8l-11 3z" fill="#aeb6be"/><path d="M2 9l7 2 1 5-6 3 2-5z" fill="#dfe3e6"/></svg></button>
    <button class="run front" aria-label="Rhinoceros"><svg viewBox="0 0 24 24"><path d="M2 2h20v20H2z" fill="#111"/><path d="M4 6l5 4 5 0 3-6 1 8 3 3-4 4-6 2-2-5-5-4z" fill="#eee"/></svg></button>
    <button aria-label="Photoshop"><svg viewBox="0 0 24 24"><path d="M3 3h18v18H3z" fill="#0b2635" stroke="#31bfe8" stroke-width="1.500"/><text x="12" y="17" class="adobe" fill="#5fd6f7">Ps</text></svg></button>
    <button aria-label="Illustrator"><svg viewBox="0 0 24 24"><path d="M3 3h18v18H3z" fill="#2c1700" stroke="#e68a1e" stroke-width="1.500"/><text x="12" y="17" class="adobe" fill="#f0921e">Ai</text></svg></button>
    <button aria-label="InDesign"><svg viewBox="0 0 24 24"><path d="M3 3h18v18H3z" fill="#3a0a20" stroke="#e02474" stroke-width="1.500"/><text x="12" y="17" class="adobe" fill="#ee3480">Id</text></svg></button>
    <button aria-label="Dots"><svg viewBox="0 0 24 24"><circle cx="12" cy="12" r="8" fill="#1e2a48" stroke="#e8edf6" stroke-width="1.500"/><g fill="none" stroke="#c6d2ec"><circle cx="12" cy="12" r="2" stroke-dasharray="1 1" stroke-width="2"/><circle cx="12" cy="12" r="5" stroke-dasharray="2 1" stroke-width="2"/></g></svg></button>
    <button aria-label="Monitor"><svg viewBox="0 0 24 24"><path d="M4 5h16v11H4z" fill="#555" stroke="#fff" stroke-width="1.500"/><path d="M8 20h8M12 16v4M9 11q3 4 6 0M9 8h1M14 8h1" stroke="#fff" fill="none"/></svg></button>
    <button class="run" aria-label="Atom"><svg viewBox="0 0 24 24"><circle cx="12" cy="12" r="9" fill="#63bf84"/><g fill="none" stroke="#fff"><ellipse cx="12" cy="12" rx="3" ry="8"/><ellipse cx="12" cy="12" rx="3" ry="8" transform="rotate(60 12 12)"/><ellipse cx="12" cy="12" rx="3" ry="8" transform="rotate(120 12 12)"/></g></svg></button>
    <button class="run" aria-label="Visual Studio"><svg viewBox="0 0 24 24"><path d="M3 5l3-2 15 0v18H6l-3-2z" fill="#5a2a7c"/><path d="M6 9l12 8V7L6 15z" fill="none" stroke="#fff" stroke-width="2"/></svg></button>
    <button aria-label="Internet Explorer"><svg viewBox="0 0 24 24"><path d="M19 13H7M19 13c0-11-13-11-13 0 0 9 10 9 12 3" fill="none" stroke="#3ba5e8" stroke-width="3.500"/><path d="M3 21C1 14 13 2 22 4" fill="none" stroke="#f0cb3a" stroke-width="2"/></svg></button>
    <button class="run" aria-label="Skype"><svg viewBox="0 0 24 24"><circle cx="12" cy="12" r="8" fill="#21aeea"/><circle cx="8" cy="7" r="5" fill="#21aeea"/><circle cx="16" cy="17" r="5" fill="#21aeea"/><text x="12" y="18" class="s-mark l">S</text></svg></button>
    <button class="run multi" aria-label="Acrobat"><svg viewBox="0 0 24 24"><path d="M4 2h12l5 5v15H4z" fill="#f3f0f0"/><path d="M3 2h6v5H3z" fill="#b3131c"/><path d="M6 19c6-3 7-9 6-13 1 8 4 9 8 9-5-1-10 0-14 4z" fill="none" stroke="#c41a24" stroke-width="1.500"/></svg></button>
    <button class="run" aria-label="Notepad++"><svg viewBox="0 0 24 24"><path d="M4 4h13v17H4z" fill="#f2f6ec" stroke="#777"/><path d="M5 10h11v10H5z" fill="#7ed02a"/><path d="M4 4h13" stroke="#222" stroke-width="2" stroke-dasharray="1 1"/><path d="M12 16L20 4l2 2-8 12z" fill="#d5c33c" stroke="#433c08" stroke-width=".7"/></svg></button>
    <button class="run" aria-label="Camtasia"><svg viewBox="0 0 24 24"><path d="M3 3h18v18H3z" fill="#fff"/><path d="M16 7H9v10h7" fill="none" stroke="#222" stroke-width="3"/><path d="M14 15h4v4h-4z" fill="#6fc02c"/></svg></button>
  </div>
  <div class="tray">
    <svg viewBox="0 0 16 16"><path d="M4 1h8v5H4z" fill="#eee"/><path d="M1 6h14v6H1z" fill="#aaa"/><path d="M4 10h8v5H4z" fill="#fff" stroke="#555"/></svg>
    <svg viewBox="0 0 16 16"><path d="M0 1h13v12H0z" fill="#2380cf"/><circle cx="5" cy="7" r="2.500" fill="none" stroke="#fff" stroke-width="1.500"/><path d="M8 4h6v5H8z" fill="#fff"/><path d="M11 7l5 9H6z" fill="#e6b24a"/></svg>
    <svg viewBox="0 0 16 16"><circle cx="7" cy="7" r="6.500" fill="#52b8e4"/><text x="7" y="11" class="mini">S</text><circle cx="12" cy="12" r="3.500" fill="#b82038" stroke="#fff"/></svg>
    <svg viewBox="0 0 16 16"><path d="M5 2l5 12M10 2l2 11M2 6l12-2M2 11l12-2" stroke="#eee" stroke-width="2"/><circle cx="3" cy="13" r="2.500" fill="#38c0c8"/></svg>
    <svg viewBox="0 0 16 16"><path d="M4 3h11l-2 12H5z" fill="#2a66c0"/><path d="M6 9l2 3 5-8" stroke="#fff" stroke-width="2" fill="none"/><path d="M1 0h5v9H1z" fill="#c01828"/></svg>
    <svg viewBox="0 0 16 16"><path d="M5 1l3 2-4 3-3-2zM11 1l4 3-3 2-4-3zM4 6l4 3-3 2-4-3zM12 6l3 2-4 3-3-2zM5 12l3-2 3 2-3 3z" fill="#eee"/></svg>
    <svg viewBox="0 0 16 16"><circle cx="8" cy="8" r="7" fill="#b6c8d4"/><path d="M8 2a6 6 0 0 1 3 11L6 8z" fill="#fff"/><path d="M3 9l6 5c-4 1-6-2-6-5z" fill="#3f9446"/></svg>
    <svg viewBox="0 0 16 16"><path d="M0 1h16v14H0z" fill="#2679c4"/><text x="8" y="11" class="mini b">box</text></svg>
    <svg viewBox="0 0 16 16"><path d="M1 1h14v14H1z" fill="#2785b8" stroke="#c2dcea"/><path d="M4 4h3M4 7h3M4 11h4M10 3v10M8 4l5 4-4 4" stroke="#fff" fill="none"/></svg>
    <svg viewBox="0 0 16 16"><path d="M1 0h6v6H1zM3 6h3v6H3z" fill="#aca5ae"/><circle cx="10" cy="10" r="5.500" fill="#3eae4a"/><path d="M7 10l2 3 4-5" stroke="#fff" stroke-width="2" fill="none"/></svg>
    <svg viewBox="0 0 16 16"><path d="M0 2h16v12H0z" fill="#3c6c12"/><path d="M2 8c4-6 9-5 12 0-4 5-9 5-12 0z" fill="#8ecb3a"/><circle cx="8" cy="8" r="2.500" fill="#233f0b"/></svg>
    <svg viewBox="0 0 16 16"><path d="M1 6q7-7 14 0M3 9q5-5 10 0M6 12q2-2 4 0" fill="none" stroke="#fff" stroke-width="1.500"/><path d="M6 8l7 7M13 8l-7 7" stroke="#d01c28" stroke-width="2"/></svg>
    <svg viewBox="0 0 16 16"><path d="M2 1h12v9l-6 5-6-5z" fill="#e8c95c"/><path d="M6 1v12M10 1v12" stroke="#a88416"/></svg>
    <svg viewBox="0 0 16 16"><path d="M2 1v14" stroke="#eee" stroke-width="1.500"/><path d="M3 2h9v7H3z" fill="#fff"/><circle cx="11" cy="11" r="4.500" fill="#cc1c2c"/><path d="M9 9l4 4M13 9l-4 4" stroke="#fff"/></svg>
    <svg viewBox="0 0 16 16"><path d="M4 3h8v12H4z" fill="#111" stroke="#fff" stroke-width="1.500"/><path d="M6 1h4v2H6zM6 6h4v7H6z" fill="#fff"/></svg>
    <svg viewBox="0 0 16 16"><path d="M1 12h2v3H1zM4 9h2v6H4zM7 7h2v8H7zM10 4h2v11h-2zM13 1h2v14h-2z" fill="#666"/><path d="M8 9l7 6M15 9l-7 6" stroke="#b01420" stroke-width="2"/></svg>
    <svg viewBox="0 0 16 16"><path d="M1 5h3l5-4v14l-5-4H1z" fill="#eee"/><circle cx="11" cy="10" r="4" fill="none" stroke="#d01c2c" stroke-width="2"/><path d="M8 7l6 6" stroke="#d01c2c" stroke-width="2"/></svg>
  </div>
  <time>11:18 AM</time>
  <button class="peek" aria-label="Show desktop"></button>
</footer>
</body>
</html>
```
FILE: styles.css
```css
* { box-sizing: border-box; }
body { margin: 0; height: 100vh; display: flex; flex-direction: column; overflow: hidden; background: #222; font: 11px/14px "Liberation Sans", Arial, sans-serif; color: #111; }
button { padding: 0; margin: 0; border: 0; background: none; font: inherit; color: inherit; }
a { color: inherit; text-decoration: none; }
h1, h2, p { margin: 0; font-weight: normal; }
svg { display: block; flex: none; }
.defs { position: absolute; width: 0; height: 0; }
.desktop { flex: 1; min-height: 0; display: grid; grid-template-columns: 1fr 1fr; }

/* Modeller window */
.rhino { min-width: 0; min-height: 0; display: flex; flex-direction: column; background: #e1e1ea; overflow: hidden; }
.rhino-title { height: 22px; display: flex; align-items: center; gap: 5px; background: linear-gradient(90deg, #8d8d8d, #a3a3a3 240px, #777 310px, #2b2b2b 340px, #333 450px, #777 520px, #333 600px, #303030 820px, #5a5a5a); border-bottom: 1px solid #555; }
.rhino-title h1, .gh-title h2 { font: 11px/16px "Open Sans", "Noto Sans", sans-serif; color: #000; }
.rhino-menu { height: 19px; display: grid; grid-template-columns: 32px 34px 39px 45px 53px 40px 43px 71px 69px 43px 55px 51px 48px 92px 82px 63px 45px 1fr; padding-left: 7px; background: linear-gradient(#f4f4fa, #dcdcea); border-bottom: 1px solid #c4c4d0; color: #6a6a74; font: 11px/19px "Open Sans", "Noto Sans", sans-serif; white-space: nowrap; }
.band { margin: 4px 0 0 2px; border-left: 4px double #b4b4c4; background: linear-gradient(#fdfdfe, #dfe1e6); border-bottom: 1px solid #c6c6d2; flex: none; }
.command { height: 150px; padding-left: 1px; background: #fdfdfd; font-size: 12px; line-height: 15px; display: flex; flex-direction: column; border-bottom: 4px solid #e1e1ea; }
.history { flex: 1; padding-top: 1px; white-space: nowrap; overflow: hidden; }
.prompt { height: 20px; border-top: 1px solid #9c9ca8; display: flex; align-items: center; font-weight: bold; }
.prompt input { flex: 1; border: 0; background: none; }
.tools { display: flex; gap: 4px; padding: 2px 3px; height: 34px; }
.tools.tall { height: 50px; }
.tools button { position: relative; width: 24px; height: 24px; }
.tools button svg { width: 24px; height: 24px; }
.tools button svg.corner { position: absolute; right: -2px; bottom: -2px; width: 5px; height: 5px; }
.glyph { font: bold 14px "Liberation Sans", Arial, sans-serif; text-anchor: middle; fill: #141414; }
.glyph.small { font-size: 12px; }
.glyph.big { font-size: 20px; }
.sun { font-size: 8px; text-anchor: middle; }
.libs { height: 57px; display: flex; flex-direction: column; background: linear-gradient(#e1e1ea 15px, #f4f6f8 16px, #dfe0e7); }
.tabs { display: grid; grid-template-columns: 100px 70px 95px 78px; height: 16px; font-size: 11px; font-family: "Open Sans", "Noto Sans", sans-serif; border-bottom: 1px solid #a4a4b4; }
.tabs button { background: #d3d3e3; border: 1px solid #a4a4b4; border-bottom: 0; border-radius: 6px 4px 0 0; line-height: 12px; white-space: nowrap; }
.tabs .on { background: #fdfdfe; height: 16px; }
.lib-row { display: flex; gap: 12px; padding: 2px 3px; }
.lib-row button { display: flex; align-items: center; gap: 5px; }
.lib-row svg { width: 24px; height: 24px; }
.work { flex: 1; min-height: 0; display: flex; }
.side { width: 42px; padding: 8px 10px 0 2px; display: flex; flex-direction: column; gap: 6px; background: #e8e8ee; border-right: 1px solid #a8a8b4; flex: none; }
.side-group { display: flex; flex-direction: column; border: 1px solid #a9a9ad; border-bottom: 0; }
.side-group button { height: 30px; display: flex; align-items: center; justify-content: center; background: #f1f1f2; border-bottom: 1px solid #a9a9ad; }
.side-group svg { width: 24px; height: 24px; }
.side-group .on { background: #b9c8e0; }
.viewport { flex: 1; background: #fdfdfd; border-top: 1px solid #8c8c98; border-bottom: 1px solid #8c8c98; display: flex; flex-direction: column; justify-content: space-between; align-items: flex-start; }
.view-label { display: flex; height: 17px; background: #92a4be; border-radius: 0 0 4px 0; font: 11px/17px "Open Sans", "Noto Sans", sans-serif; }
.view-label span { width: 77px; text-align: center; border-right: 1px solid #111; }
.view-label button { width: 11px; display: flex; align-items: center; justify-content: center; }
.scene { width: 220px; height: 70px; margin-bottom: 34px; overflow: visible; font: bold 11px "DejaVu Sans", sans-serif; fill: #555; }
.view-tabs { display: flex; height: 22px; padding-left: 42px; flex: none; font: 11px/21px "Open Sans", "Noto Sans", sans-serif; }
.view-tabs button { display: flex; align-items: center; justify-content: center; height: 22px; padding: 0 6px 0 10px; background: #d5d5e4; border: 1px solid #a4a4b4; border-top: 0; border-radius: 0 0 4px 10px; }
.view-tabs .on { background: #fff; }
.view-tabs button:last-child { width: 31px; background: #e6e6ee; }
.checks { display: grid; align-items: center; margin: 0 0 0 3px; padding-left: 5px; border-left: 3px double #b4b4c4; flex: none; white-space: nowrap; }
.checks label { display: flex; align-items: center; gap: 5px; }
.filters { height: 29px; grid-template-columns: 55px 59px 68px 86px 64px 82px 53px 58px 90px 85px 66px 57px 1fr; border-bottom: 1px solid #c8c8d4; margin-top: 1px; }
.snaps { height: 25px; grid-template-columns: 44px 48px 49px 42px 44px 37px 47px 44px 51px 47px 54px 58px 1fr; }
.checks input { appearance: none; margin: 0; width: 13px; height: 13px; background: #f2f2f6; border: 1px solid #82828c; display: grid; place-items: start center; flex: none; }
.checks input:checked::before { content: ""; width: 5px; height: 8px; border: solid #44408c; border-width: 0 2px 2px 0; transform: rotate(40deg); }
.checks .round { width: 15px; height: 15px; border-radius: 3px; background: linear-gradient(#fff, #d4d4da); border: 1px solid #666; margin: 0 -1px; }
.rhino-status { height: 20px; flex: none; display: grid; grid-template-columns: 56px 88px 88px 88px 89px 173px 76px 47px 53px 55px 84px 1fr; border-top: 1px solid #a8a8b4; font-size: 12px; line-height: 20px; text-align: center; white-space: nowrap; }
.rhino-status > * { border-right: 1px solid #a8a8b4; }
.rhino-status .layer { display: flex; align-items: center; gap: 2px; padding-left: 3px; }
.layer i { width: 14px; height: 14px; background: #000; }
.rhino-status .on { font-weight: bold; background: #e8f2f7; }

/* Grasshopper window */
.gh { position: relative; min-width: 0; min-height: 0; margin: 1px 1px 2px 0; display: flex; flex-direction: column; padding: 0 6px 5px; border: 1px solid #2a2a2a; border-radius: 7px; box-shadow: inset 0 0 0 1px #c9c9c9, 0 0 10px #555; background: linear-gradient(90deg, #8c8c8c, #979797 200px, #4c4a47 260px, #3d3c3a 500px, #4a4a48 700px, #888 850px, #8d8d8d); }
.gh-title { height: 27px; display: flex; justify-content: space-between; align-items: flex-start; flex: none; }
.gh-title h2 { padding: 5px 0 0 2px; }
.win-buttons { display: grid; grid-template-columns: 28px 27px 47px; height: 19px; border: 1px solid #ddd; border-top: 0; border-radius: 0 0 5px 5px; overflow: hidden; }
.win-buttons button { display: grid; place-items: center; background: linear-gradient(#aaa, #666 50%, #888); border-right: 1px solid #ddd; }
.win-buttons .close { background: linear-gradient(#d98c84, #b3221c 50%, #d65548); border: 0; }
.gh-body { flex: 1; min-height: 0; display: flex; flex-direction: column; border: 1px solid #333; background: #f1f1f1; }
.gh-menu { height: 24px; flex: none; display: grid; grid-template-columns: 36px 37px 42px 53px 57px 41px 78px 80px 1fr; padding: 0 10px 0 14px; line-height: 24px; background: #f8f8f8; white-space: nowrap; }
.gh-menu .doc { text-align: right; }
.cats { height: 23px; flex: none; display: grid; grid-template-columns: repeat(33, 28px) 1fr; font: 800 15px/22px "Open Sans", "Noto Sans", sans-serif; color: #333; border-bottom: 1px solid #9a9a9a; overflow: hidden; }
.cats button { display: grid; place-items: center; }
.cats svg { width: 16px; height: 16px; fill: #3c3c3c; }
.cats .ln { fill: none; stroke: #3c3c3c; stroke-width: 2; }
.cats .on { background: #fdfdfd; border: 1px solid #9a9a9a; border-bottom: 0; border-radius: 6px 6px 0 0; }
.ribbon { height: 86px; flex: none; display: flex; align-items: flex-start; gap: 3px; padding: 2px 3px 0; background: linear-gradient(#d6d6d6, #f0f0f0); border-bottom: 1px solid #666; }
.panel { position: relative; margin: 0; padding: 3px 3px 0; min-width: 0; height: 73px; border: 1px solid #888; border-radius: 5px; background: #e3e3e3; overflow: hidden; display: flex; flex-direction: column; justify-content: space-between; flex: none; }
.icons { display: grid; grid-auto-rows: 23px; gap: 5px; grid-template-columns: repeat(6, 23px); }
.c2 { width: 61px; } .c2 .icons { grid-template-columns: repeat(2, 23px); }
.c3 { width: 89px; } .c3 .icons { grid-template-columns: repeat(3, 23px); }
.c4 { width: 117px; } .c4 .icons { grid-template-columns: repeat(4, 23px); }
.c6 { width: 173px; }
.util { width: 183px; } .util .icons { grid-template-columns: repeat(5, 23px) 33px; }
.util .after-rule, .util .last { grid-column: 6; margin-left: 10px; }
.icons button { border-radius: 4px; background: linear-gradient(#b8e2ef, #9fd8ec); box-shadow: 0 0 2px #7d9aa4; }
.icons svg { width: 23px; height: 23px; }
.panel legend { position: absolute; left: -1px; right: -1px; bottom: 0; float: none; padding: 0 10px 0 0; height: 13px; background: #1d1d1d; color: #fff; text-align: center; line-height: 12px; }
.panel legend b { position: absolute; right: 3px; top: 0; color: #bbb; }
.abc { font: bold 9px "Liberation Sans", Arial, sans-serif; text-anchor: middle; }
.tiny, .lab, .exp { font: bold 7px "Liberation Sans", Arial, sans-serif; text-anchor: middle; }
.lab { font-size: 5px; fill: #333; } .exp { fill: #c03050; font-size: 6px; }
.bin { font: bold 8px "Liberation Sans", Arial, sans-serif; text-anchor: middle; }
.num { font: bold 9px "Liberation Sans", Arial, sans-serif; text-anchor: middle; }
.info { font: italic bold 19px "Liberation Serif", serif; text-anchor: middle; fill: #fff; }
.info.dark { fill: #111; }
.canvas-bar { height: 34px; flex: none; display: flex; align-items: center; padding: 0 0 0 6px; gap: 4px; background: linear-gradient(#fff, #f0efee); border-bottom: 1px solid #bbb; }
.canvas-bar button, .canvas-bar button svg { width: 22px; height: 22px; }
.canvas-bar button:first-child { margin-right: 5px; }
.canvas-bar .picked { width: 28px; height: 28px; padding: 2px; margin-right: 6px; border: 1px solid #3a9ad0; }
.canvas-bar hr { width: 1px; height: 20px; margin: 0 2px; border: 0; background: #bbb; }
.canvas-bar .drop { width: 6px; height: 4px; margin-right: 4px; }
.zoom-box { display: flex; align-items: center; width: 69px; height: 25px; padding-right: 5px; background: #fff; border: 1px solid #e2e2e2; }
.zoom-box select { flex: 1; appearance: none; border: 0; padding: 0 0 0 2px; background: none; font: 12px "Open Sans", "Noto Sans", sans-serif; color: #111; }
.spacer { flex: 1; }
.canvas { flex: 1; min-height: 0; position: relative; overflow: hidden; background: #ccc7c3; }
.graph { position: absolute; inset: 0; }
.head { font: 27px "Liberation Sans", Arial, sans-serif; fill: #050505; }
.wire { fill: none; stroke: #555; stroke-width: 1; }
.sheet rect { fill: #fdfdfd; stroke: #333; }
.node rect { fill: #8f8d9b; stroke: #2b2a30; }
.core rect { fill: #262626; stroke: #111; }
.dot circle { fill: #fff; stroke: #111; }
.pin circle { fill: #ccc; stroke: #444; stroke-width: 1; }
.v { font: 8px "Open Sans", sans-serif; fill: #ddd; }
.v.s { font-size: 7px; }
.v.xs { font-size: 6px; }
.v.g { fill: #58b070; }
.port { font-size: 5px; fill: #333; }
.tip { position: absolute; left: 208px; top: 592px; width: 529px; border: 1px solid #000; background: #ffffc0; font-size: 11px; }
.tip-head { height: 33px; display: flex; align-items: center; gap: 14px; padding-left: 4px; background: #f9d062; font: 14px "Open Sans", "Noto Sans", sans-serif; }
.tip-head svg { width: 23px; height: 23px; }
.tip p { padding: 6px 6px 9px; white-space: nowrap; }
.ran { height: 18px; margin: 0 4px 5px; padding-left: 4px; border: 1px solid #4d5220; background: #e8ebb0; box-shadow: inset 0 0 4px #b0b47a; font: 11px/16px "Liberation Serif", "Times New Roman", serif; }
.gh-status { height: 24px; flex: none; display: flex; align-items: center; gap: 3px; padding: 4px 4px 0 3px; background: #f6f4f3; }
.gh-status .ver { margin-left: auto; color: #777; }

/* Taskbar */
.taskbar { height: 30px; flex: none; display: flex; align-items: center; background: linear-gradient(90deg, #1a1a1a, #3e3e3e 110px, #565656 500px, #484848 900px, #555 1200px, #3c3c3c 1400px, #181c20 1650px, #101214); border-top: 1px solid #777; position: relative; }
.start { width: 58px; height: 29px; }
.start svg { position: absolute; left: 8px; top: -5px; width: 38px; height: 38px; }
.apps { display: flex; gap: 4px; margin-left: 2px; }
.apps button { width: 42px; height: 29px; display: grid; place-items: center; }
.apps svg { width: 20px; height: 20px; }
.apps .run { border: 1px solid #999; border-bottom-color: #666; border-radius: 3px; background: linear-gradient(150deg, #8b8b8b, #505050 60%, #6a6a6a); }
.apps .multi { border-right: 4px double #999; }
.apps .front { background: linear-gradient(150deg, #e6e6e6, #9a9a9a); border-color: #ddd; }
.adobe { font: bold 10px "Open Sans", sans-serif; text-anchor: middle; }
.s-mark { font: bold 10px "Liberation Sans", Arial, sans-serif; text-anchor: middle; fill: #fff; }
.s-mark.l { font-size: 15px; }
.mini { font: bold 10px "Liberation Sans", Arial, sans-serif; text-anchor: middle; fill: #fff; }
.mini.b { font-size: 7px; }
.tray { margin-left: auto; display: flex; gap: 8px; }
.tray svg { width: 16px; height: 16px; }
.taskbar time { width: 78px; text-align: center; color: #fff; font: 12px/28px "Open Sans", "Noto Sans", sans-serif; }
.peek { width: 15px; height: 29px; border: 1px solid #666; background: #222; }
```
